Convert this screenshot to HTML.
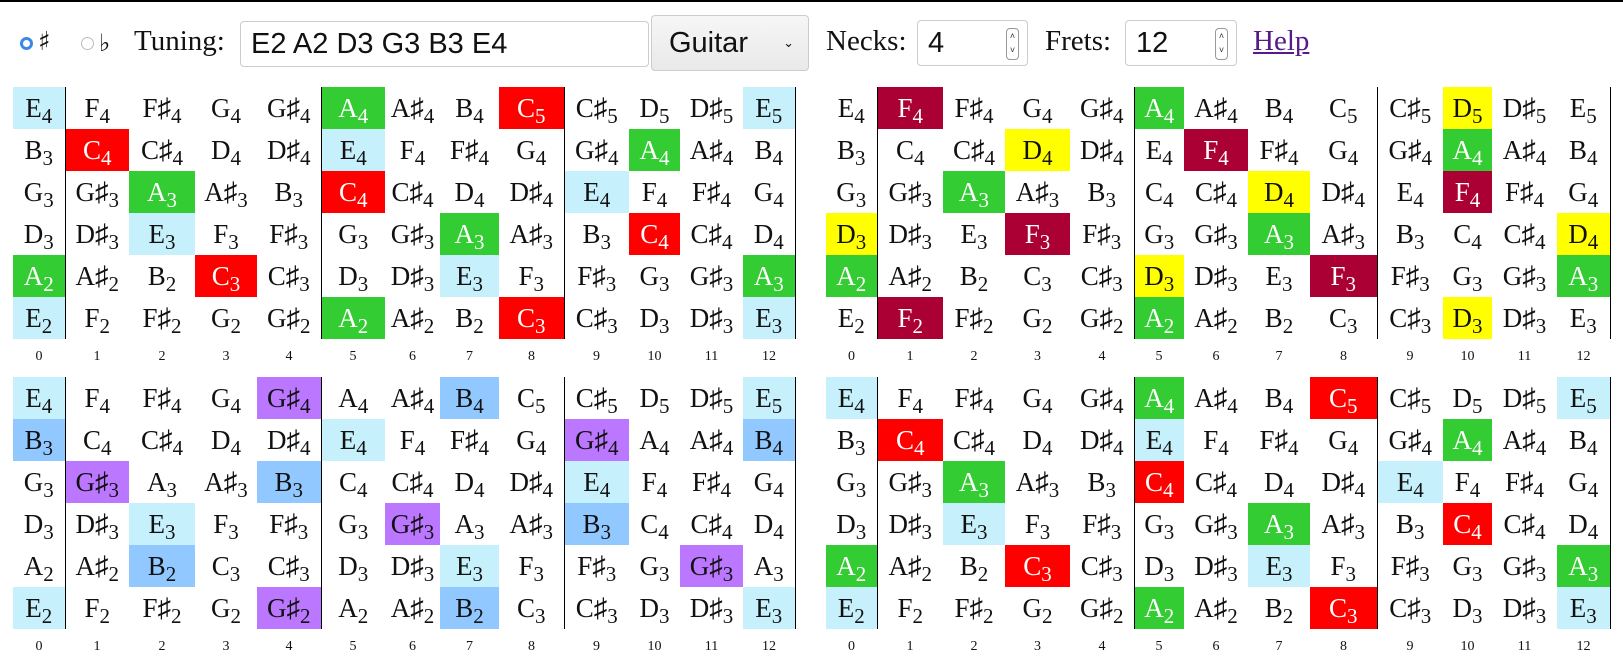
<!DOCTYPE html>
<html><head><meta charset="utf-8"><style>
body{margin:0;width:1623px;height:659px;background:#fff;position:relative;overflow:hidden;font-family:"Liberation Serif","DejaVu Serif",serif;color:#111}
.top{position:absolute;left:0;top:0;width:1623px;height:2px;background:#000}
.ab{position:absolute}
.lbl{font-size:29px;top:25px}
.box{border:1px solid #ccc;border-radius:4px;background:#fff;font-family:"Liberation Sans","DejaVu Sans",sans-serif;font-size:29px;box-sizing:border-box;padding-left:10px;line-height:44px}
.sp{position:absolute;right:8px;top:7px;width:11px;height:30px;border:1px solid #999;border-radius:4px;font-size:9px;line-height:14px;text-align:center;color:#333}
table{position:absolute;border-collapse:collapse;table-layout:fixed}
td{padding:0;height:42px;text-align:center;font-size:27px;white-space:nowrap;font-family:"Liberation Serif","DejaVu Serif",serif}
sub{font-size:21px;vertical-align:-6px;line-height:0}
tr td:nth-child(2),tr td:nth-child(6),tr td:nth-child(10){border-left:1.5px solid #000}
tr td:nth-child(13){border-right:1.5px solid #000}
tr.n td{border:none;height:26px;font-size:14px;vertical-align:bottom}
.l{background:#c6f1fc}.g{background:#33cc33;color:#fff}.r{background:#ff0000;color:#fff}.m{background:#aa0033;color:#fff}.y{background:#ffff00}.p{background:#bb77ff}.b{background:#90c8ff}
</style></head><body>
<div class="top"></div>
<div class="ab" style="left:20px;top:37px;width:13px;height:13px;border-radius:50%;border:3px solid #3b88e8;box-sizing:border-box;background:#fff"></div>
<div class="ab" style="left:38px;top:27px;font-size:26px;font-family:'DejaVu Serif',serif">♯</div>
<div class="ab" style="left:81px;top:37px;width:13px;height:13px;border-radius:50%;border:1px solid #bbb;box-sizing:border-box"></div>
<div class="ab" style="left:99px;top:29px;font-size:24px;font-style:italic">♭</div>
<div class="ab lbl" style="left:134px">Tuning:</div>
<div class="ab box" style="left:240px;top:21px;width:409px;height:46px">E2 A2 D3 G3 B3 E4</div>
<div class="ab box" style="left:651px;top:15px;width:158px;height:56px;background:linear-gradient(#f6f6f6,#e9e9e9);line-height:54px;padding-left:17px">Guitar<span style="position:absolute;right:14px;font-size:13px">⌄</span></div>
<div class="ab lbl" style="left:826px">Necks:</div>
<div class="ab box" style="left:917px;top:20px;width:111px;height:46px">4<span class="sp">˄<br>˅</span></div>
<div class="ab lbl" style="left:1045px">Frets:</div>
<div class="ab box" style="left:1125px;top:20px;width:112px;height:46px">12<span class="sp">˄<br>˅</span></div>
<div class="ab lbl" style="left:1253px;color:#551a8b;text-decoration:underline">Help</div>

<!-- NECK 1 -->
<table style="left:13px;top:87px;width:782px">
<colgroup><col style="width:52px"><col style="width:64px"><col style="width:66px"><col style="width:62px"><col style="width:64px"><col style="width:64px"><col style="width:55px"><col style="width:59px"><col style="width:65px"><col style="width:65px"><col style="width:51px"><col style="width:63px"><col style="width:52px"></colgroup>
<tr><td class="l">E<sub>4</sub></td><td>F<sub>4</sub></td><td>F♯<sub>4</sub></td><td>G<sub>4</sub></td><td>G♯<sub>4</sub></td><td class="g">A<sub>4</sub></td><td>A♯<sub>4</sub></td><td>B<sub>4</sub></td><td class="r">C<sub>5</sub></td><td>C♯<sub>5</sub></td><td>D<sub>5</sub></td><td>D♯<sub>5</sub></td><td class="l">E<sub>5</sub></td></tr>
<tr><td>B<sub>3</sub></td><td class="r">C<sub>4</sub></td><td>C♯<sub>4</sub></td><td>D<sub>4</sub></td><td>D♯<sub>4</sub></td><td class="l">E<sub>4</sub></td><td>F<sub>4</sub></td><td>F♯<sub>4</sub></td><td>G<sub>4</sub></td><td>G♯<sub>4</sub></td><td class="g">A<sub>4</sub></td><td>A♯<sub>4</sub></td><td>B<sub>4</sub></td></tr>
<tr><td>G<sub>3</sub></td><td>G♯<sub>3</sub></td><td class="g">A<sub>3</sub></td><td>A♯<sub>3</sub></td><td>B<sub>3</sub></td><td class="r">C<sub>4</sub></td><td>C♯<sub>4</sub></td><td>D<sub>4</sub></td><td>D♯<sub>4</sub></td><td class="l">E<sub>4</sub></td><td>F<sub>4</sub></td><td>F♯<sub>4</sub></td><td>G<sub>4</sub></td></tr>
<tr><td>D<sub>3</sub></td><td>D♯<sub>3</sub></td><td class="l">E<sub>3</sub></td><td>F<sub>3</sub></td><td>F♯<sub>3</sub></td><td>G<sub>3</sub></td><td>G♯<sub>3</sub></td><td class="g">A<sub>3</sub></td><td>A♯<sub>3</sub></td><td>B<sub>3</sub></td><td class="r">C<sub>4</sub></td><td>C♯<sub>4</sub></td><td>D<sub>4</sub></td></tr>
<tr><td class="g">A<sub>2</sub></td><td>A♯<sub>2</sub></td><td>B<sub>2</sub></td><td class="r">C<sub>3</sub></td><td>C♯<sub>3</sub></td><td>D<sub>3</sub></td><td>D♯<sub>3</sub></td><td class="l">E<sub>3</sub></td><td>F<sub>3</sub></td><td>F♯<sub>3</sub></td><td>G<sub>3</sub></td><td>G♯<sub>3</sub></td><td class="g">A<sub>3</sub></td></tr>
<tr><td class="l">E<sub>2</sub></td><td>F<sub>2</sub></td><td>F♯<sub>2</sub></td><td>G<sub>2</sub></td><td>G♯<sub>2</sub></td><td class="g">A<sub>2</sub></td><td>A♯<sub>2</sub></td><td>B<sub>2</sub></td><td class="r">C<sub>3</sub></td><td>C♯<sub>3</sub></td><td>D<sub>3</sub></td><td>D♯<sub>3</sub></td><td class="l">E<sub>3</sub></td></tr>
<tr class="n"><td>0</td><td>1</td><td>2</td><td>3</td><td>4</td><td>5</td><td>6</td><td>7</td><td>8</td><td>9</td><td>10</td><td>11</td><td>12</td></tr>
</table>

<!-- NECK 2 -->
<table style="left:826px;top:87px;width:784px">
<colgroup><col style="width:51px"><col style="width:66px"><col style="width:62px"><col style="width:65px"><col style="width:64px"><col style="width:50px"><col style="width:64px"><col style="width:62px"><col style="width:67px"><col style="width:66px"><col style="width:49px"><col style="width:65px"><col style="width:53px"></colgroup>
<tr><td>E<sub>4</sub></td><td class="m">F<sub>4</sub></td><td>F♯<sub>4</sub></td><td>G<sub>4</sub></td><td>G♯<sub>4</sub></td><td class="g">A<sub>4</sub></td><td>A♯<sub>4</sub></td><td>B<sub>4</sub></td><td>C<sub>5</sub></td><td>C♯<sub>5</sub></td><td class="y">D<sub>5</sub></td><td>D♯<sub>5</sub></td><td>E<sub>5</sub></td></tr>
<tr><td>B<sub>3</sub></td><td>C<sub>4</sub></td><td>C♯<sub>4</sub></td><td class="y">D<sub>4</sub></td><td>D♯<sub>4</sub></td><td>E<sub>4</sub></td><td class="m">F<sub>4</sub></td><td>F♯<sub>4</sub></td><td>G<sub>4</sub></td><td>G♯<sub>4</sub></td><td class="g">A<sub>4</sub></td><td>A♯<sub>4</sub></td><td>B<sub>4</sub></td></tr>
<tr><td>G<sub>3</sub></td><td>G♯<sub>3</sub></td><td class="g">A<sub>3</sub></td><td>A♯<sub>3</sub></td><td>B<sub>3</sub></td><td>C<sub>4</sub></td><td>C♯<sub>4</sub></td><td class="y">D<sub>4</sub></td><td>D♯<sub>4</sub></td><td>E<sub>4</sub></td><td class="m">F<sub>4</sub></td><td>F♯<sub>4</sub></td><td>G<sub>4</sub></td></tr>
<tr><td class="y">D<sub>3</sub></td><td>D♯<sub>3</sub></td><td>E<sub>3</sub></td><td class="m">F<sub>3</sub></td><td>F♯<sub>3</sub></td><td>G<sub>3</sub></td><td>G♯<sub>3</sub></td><td class="g">A<sub>3</sub></td><td>A♯<sub>3</sub></td><td>B<sub>3</sub></td><td>C<sub>4</sub></td><td>C♯<sub>4</sub></td><td class="y">D<sub>4</sub></td></tr>
<tr><td class="g">A<sub>2</sub></td><td>A♯<sub>2</sub></td><td>B<sub>2</sub></td><td>C<sub>3</sub></td><td>C♯<sub>3</sub></td><td class="y">D<sub>3</sub></td><td>D♯<sub>3</sub></td><td>E<sub>3</sub></td><td class="m">F<sub>3</sub></td><td>F♯<sub>3</sub></td><td>G<sub>3</sub></td><td>G♯<sub>3</sub></td><td class="g">A<sub>3</sub></td></tr>
<tr><td>E<sub>2</sub></td><td class="m">F<sub>2</sub></td><td>F♯<sub>2</sub></td><td>G<sub>2</sub></td><td>G♯<sub>2</sub></td><td class="g">A<sub>2</sub></td><td>A♯<sub>2</sub></td><td>B<sub>2</sub></td><td>C<sub>3</sub></td><td>C♯<sub>3</sub></td><td class="y">D<sub>3</sub></td><td>D♯<sub>3</sub></td><td>E<sub>3</sub></td></tr>
<tr class="n"><td>0</td><td>1</td><td>2</td><td>3</td><td>4</td><td>5</td><td>6</td><td>7</td><td>8</td><td>9</td><td>10</td><td>11</td><td>12</td></tr>
</table>

<!-- NECK 3 -->
<table style="left:13px;top:377px;width:782px">
<colgroup><col style="width:52px"><col style="width:64px"><col style="width:66px"><col style="width:62px"><col style="width:64px"><col style="width:64px"><col style="width:55px"><col style="width:59px"><col style="width:65px"><col style="width:65px"><col style="width:51px"><col style="width:63px"><col style="width:52px"></colgroup>
<tr><td class="l">E<sub>4</sub></td><td>F<sub>4</sub></td><td>F♯<sub>4</sub></td><td>G<sub>4</sub></td><td class="p">G♯<sub>4</sub></td><td>A<sub>4</sub></td><td>A♯<sub>4</sub></td><td class="b">B<sub>4</sub></td><td>C<sub>5</sub></td><td>C♯<sub>5</sub></td><td>D<sub>5</sub></td><td>D♯<sub>5</sub></td><td class="l">E<sub>5</sub></td></tr>
<tr><td class="b">B<sub>3</sub></td><td>C<sub>4</sub></td><td>C♯<sub>4</sub></td><td>D<sub>4</sub></td><td>D♯<sub>4</sub></td><td class="l">E<sub>4</sub></td><td>F<sub>4</sub></td><td>F♯<sub>4</sub></td><td>G<sub>4</sub></td><td class="p">G♯<sub>4</sub></td><td>A<sub>4</sub></td><td>A♯<sub>4</sub></td><td class="b">B<sub>4</sub></td></tr>
<tr><td>G<sub>3</sub></td><td class="p">G♯<sub>3</sub></td><td>A<sub>3</sub></td><td>A♯<sub>3</sub></td><td class="b">B<sub>3</sub></td><td>C<sub>4</sub></td><td>C♯<sub>4</sub></td><td>D<sub>4</sub></td><td>D♯<sub>4</sub></td><td class="l">E<sub>4</sub></td><td>F<sub>4</sub></td><td>F♯<sub>4</sub></td><td>G<sub>4</sub></td></tr>
<tr><td>D<sub>3</sub></td><td>D♯<sub>3</sub></td><td class="l">E<sub>3</sub></td><td>F<sub>3</sub></td><td>F♯<sub>3</sub></td><td>G<sub>3</sub></td><td class="p">G♯<sub>3</sub></td><td>A<sub>3</sub></td><td>A♯<sub>3</sub></td><td class="b">B<sub>3</sub></td><td>C<sub>4</sub></td><td>C♯<sub>4</sub></td><td>D<sub>4</sub></td></tr>
<tr><td>A<sub>2</sub></td><td>A♯<sub>2</sub></td><td class="b">B<sub>2</sub></td><td>C<sub>3</sub></td><td>C♯<sub>3</sub></td><td>D<sub>3</sub></td><td>D♯<sub>3</sub></td><td class="l">E<sub>3</sub></td><td>F<sub>3</sub></td><td>F♯<sub>3</sub></td><td>G<sub>3</sub></td><td class="p">G♯<sub>3</sub></td><td>A<sub>3</sub></td></tr>
<tr><td class="l">E<sub>2</sub></td><td>F<sub>2</sub></td><td>F♯<sub>2</sub></td><td>G<sub>2</sub></td><td class="p">G♯<sub>2</sub></td><td>A<sub>2</sub></td><td>A♯<sub>2</sub></td><td class="b">B<sub>2</sub></td><td>C<sub>3</sub></td><td>C♯<sub>3</sub></td><td>D<sub>3</sub></td><td>D♯<sub>3</sub></td><td class="l">E<sub>3</sub></td></tr>
<tr class="n"><td>0</td><td>1</td><td>2</td><td>3</td><td>4</td><td>5</td><td>6</td><td>7</td><td>8</td><td>9</td><td>10</td><td>11</td><td>12</td></tr>
</table>

<!-- NECK 4 -->
<table style="left:826px;top:377px;width:784px">
<colgroup><col style="width:51px"><col style="width:66px"><col style="width:62px"><col style="width:65px"><col style="width:64px"><col style="width:50px"><col style="width:64px"><col style="width:62px"><col style="width:67px"><col style="width:66px"><col style="width:49px"><col style="width:65px"><col style="width:53px"></colgroup>
<tr><td class="l">E<sub>4</sub></td><td>F<sub>4</sub></td><td>F♯<sub>4</sub></td><td>G<sub>4</sub></td><td>G♯<sub>4</sub></td><td class="g">A<sub>4</sub></td><td>A♯<sub>4</sub></td><td>B<sub>4</sub></td><td class="r">C<sub>5</sub></td><td>C♯<sub>5</sub></td><td>D<sub>5</sub></td><td>D♯<sub>5</sub></td><td class="l">E<sub>5</sub></td></tr>
<tr><td>B<sub>3</sub></td><td class="r">C<sub>4</sub></td><td>C♯<sub>4</sub></td><td>D<sub>4</sub></td><td>D♯<sub>4</sub></td><td class="l">E<sub>4</sub></td><td>F<sub>4</sub></td><td>F♯<sub>4</sub></td><td>G<sub>4</sub></td><td>G♯<sub>4</sub></td><td class="g">A<sub>4</sub></td><td>A♯<sub>4</sub></td><td>B<sub>4</sub></td></tr>
<tr><td>G<sub>3</sub></td><td>G♯<sub>3</sub></td><td class="g">A<sub>3</sub></td><td>A♯<sub>3</sub></td><td>B<sub>3</sub></td><td class="r">C<sub>4</sub></td><td>C♯<sub>4</sub></td><td>D<sub>4</sub></td><td>D♯<sub>4</sub></td><td class="l">E<sub>4</sub></td><td>F<sub>4</sub></td><td>F♯<sub>4</sub></td><td>G<sub>4</sub></td></tr>
<tr><td>D<sub>3</sub></td><td>D♯<sub>3</sub></td><td class="l">E<sub>3</sub></td><td>F<sub>3</sub></td><td>F♯<sub>3</sub></td><td>G<sub>3</sub></td><td>G♯<sub>3</sub></td><td class="g">A<sub>3</sub></td><td>A♯<sub>3</sub></td><td>B<sub>3</sub></td><td class="r">C<sub>4</sub></td><td>C♯<sub>4</sub></td><td>D<sub>4</sub></td></tr>
<tr><td class="g">A<sub>2</sub></td><td>A♯<sub>2</sub></td><td>B<sub>2</sub></td><td class="r">C<sub>3</sub></td><td>C♯<sub>3</sub></td><td>D<sub>3</sub></td><td>D♯<sub>3</sub></td><td class="l">E<sub>3</sub></td><td>F<sub>3</sub></td><td>F♯<sub>3</sub></td><td>G<sub>3</sub></td><td>G♯<sub>3</sub></td><td class="g">A<sub>3</sub></td></tr>
<tr><td class="l">E<sub>2</sub></td><td>F<sub>2</sub></td><td>F♯<sub>2</sub></td><td>G<sub>2</sub></td><td>G♯<sub>2</sub></td><td class="g">A<sub>2</sub></td><td>A♯<sub>2</sub></td><td>B<sub>2</sub></td><td class="r">C<sub>3</sub></td><td>C♯<sub>3</sub></td><td>D<sub>3</sub></td><td>D♯<sub>3</sub></td><td class="l">E<sub>3</sub></td></tr>
<tr class="n"><td>0</td><td>1</td><td>2</td><td>3</td><td>4</td><td>5</td><td>6</td><td>7</td><td>8</td><td>9</td><td>10</td><td>11</td><td>12</td></tr>
</table>
</body></html>
